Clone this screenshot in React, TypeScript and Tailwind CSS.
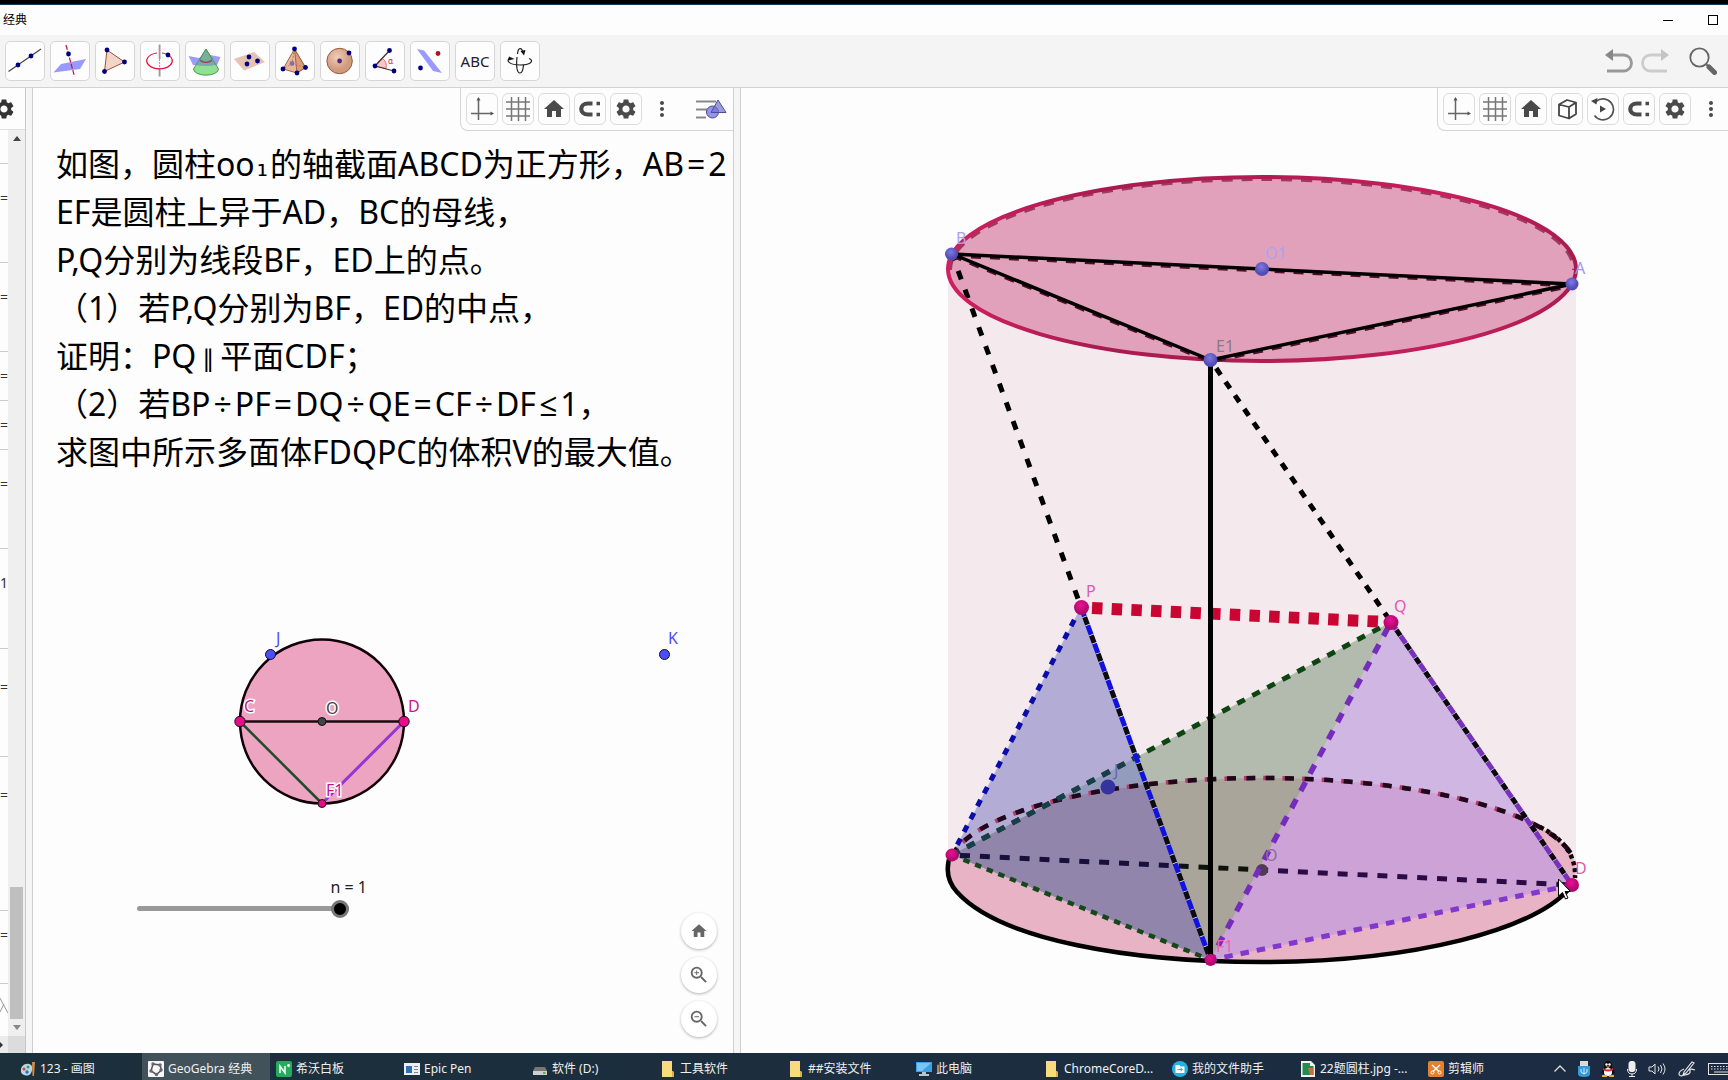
import React from 'react';
import { MdHome, MdMoreVert, MdSettings, MdZoomIn, MdZoomOut } from 'react-icons/md';

type IconProps = { className?: string };

const NAVY = '#00007f';

const Dot = ({ x, y, fill = NAVY, r = 2.4 }: { x: number; y: number; fill?: string; r?: number }) => (
    <circle cx={x} cy={y} r={r} fill={fill} />
);

/* ---------- tool icons ---------- */

const LineIcon = () => (
    <>
        <path d="M3.5 30.5L36 8" stroke="#444" strokeWidth="1.2" />
        <Dot x={13} y={24} />
        <Dot x={26} y={15} />
    </>
);

const PerpendicularIcon = () => (
    <>
        <path d="M3.500 31.500L11 23L36 18L30 28Z" fill="#9999ff" />
        <path d="M16 4L24.5 35.5" stroke="#c8102e" strokeWidth="1.2" strokeDasharray="5 1.5" />
        <Dot x={18.5} y={13} />
    </>
);

const PolygonIcon = () => (
    <>
        <path d="M12 9L29.5 21L9.5 30.5Z" fill="#f3d5c8" stroke="#a0522d" />
        <Dot x={12} y={9} />
        <Dot x={29.5} y={21} />
        <Dot x={9.5} y={30.5} />
    </>
);

const AxisCircleIcon = () => (
    <>
        <path d="M19.6 3.5V18M19.6 28V35.5" stroke="#999" strokeWidth="1.8" />
        <path d="M19.6 18V28" stroke="#999" strokeWidth="1" strokeDasharray="2 1" />
        <path d="M17 12A12.7 8 0 1 0 22 12" fill="none" stroke="#dc143c" strokeWidth="1.2" />
        <Dot x={28} y={14} />
    </>
);

const IntersectIcon = () => (
    <>
        <path d="M3.500 15L14 17L20 13L35.500 16L32 24H8Z" fill="#9c9cf5" />
        <path d="M21 8L8.500 28A12.5 6.200 0 0 0 33.500 28Z" fill="#8fe08f" stroke="#2a8a3a" strokeWidth="0.8" />
        <path d="M21 8L15 18Q21 24 27 18Z" fill="#7cae9c" stroke="#2a8a3a" strokeWidth="0.6" />
        <path d="M15 18Q21 24 27 18L31 24Q21 26 11 24Z" fill="#6f8fc0" opacity="0.7" />
        <path d="M15 19.500Q21 23.500 27 19.500" fill="none" stroke="#a03050" strokeWidth="1.2" />
    </>
);

const PlaneIcon = () => (
    <>
        <path d="M4 18L24 11L35 21L14 29.500Z" fill="#e6c3b1" />
        <Dot x={19} y={16} />
        <Dot x={27.5} y={20} />
        <Dot x={17} y={23} />
    </>
);

const PyramidIcon = () => (
    <>
        <path d="M19.500 8L8 28L22 32L30.500 26.500Z" fill="#e8b89b" stroke="#a0522d" strokeWidth="0.9" />
        <path d="M19.500 8L22 32L30.500 26.500Z" fill="#d99c7a" stroke="#a0522d" strokeWidth="0.8" />
        <path d="M19.500 8L17 22.500L8 28M17 22.500L30.500 26.500" fill="none" stroke="#b36b50" strokeWidth="0.8" strokeDasharray="2 1.500" />
        <Dot x={17} y={22.5} fill="#8d6bb0" />
        <Dot x={19.5} y={8} />
        <Dot x={8} y={28} />
        <Dot x={22} y={32} />
        <Dot x={30.5} y={26.5} />
    </>
);

const SphereIcon = () => (
    <>
        <defs>
            <radialGradient id="ball" cx="40%" cy="35%">
                <stop offset="0" stopColor="#f2cdb9" />
                <stop offset="1" stopColor="#cf9a7e" />
            </radialGradient>
        </defs>
        <circle cx="19.6" cy="20" r="12.7" fill="url(#ball)" stroke="#9a5a3a" />
        <Dot x={19.6} y={20} fill="#4b2a78" />
        <Dot x={29} y={12} />
    </>
);

const AngleIcon = () => (
    <>
        <path d="M10 25L17 17A10 10 0 0 1 21 27.500Z" fill="#ffc4c4" stroke="#e05560" strokeWidth="0.8" />
        <path d="M24.500 9.500L10 25L29 30" fill="none" stroke="#333" strokeWidth="1.2" />
        <Dot x={10} y={25} />
        <Dot x={24.5} y={9.5} />
        <Dot x={29} y={30} />
        <text x="23" y="23" className="text-[8px]" fill="#dc2040" fontFamily="Noto Sans">α</text>
    </>
);

const ReflectIcon = () => (
    <>
        <path d="M7 8L14 9.500L32 32L23 30Z" fill="#9999ff" />
        <Dot x={28} y={12.5} fill="#b01028" />
        <Dot x={10.5} y={27} />
    </>
);

const RotateViewIcon = () => (
    <>
        <path d="M10 17C5 20 10 24 20 24S35 20 29 17.500" fill="none" stroke="#222" strokeWidth="1.200" />
        <path d="M17 16C16 26 17 32 20 32S23 28 23.500 24M23 12C22 6 18 6 17.500 13" fill="none" stroke="#222" strokeWidth="1.200" />
        <path d="M20.500 10L25.500 9L24 14.500ZM8 19.500L9 15.500L14.500 18Z" fill="#111" />
    </>
);

const tools = [
    { name: 'Line', icon: <LineIcon /> },
    { name: 'Perpendicular line', icon: <PerpendicularIcon /> },
    { name: 'Polygon', icon: <PolygonIcon /> },
    { name: 'Circle with axis', icon: <AxisCircleIcon /> },
    { name: 'Intersect two surfaces', icon: <IntersectIcon /> },
    { name: 'Plane through three points', icon: <PlaneIcon /> },
    { name: 'Pyramid', icon: <PyramidIcon /> },
    { name: 'Sphere', icon: <SphereIcon /> },
    { name: 'Angle', icon: <AngleIcon /> },
    { name: 'Reflect about plane', icon: <ReflectIcon /> },
    { name: 'Text', icon: null },
    { name: 'Rotate 3D view', icon: <RotateViewIcon /> },
];

/* ---------- view bar icons ---------- */

const AxesIcon = ({ className }: IconProps) => (
    <svg viewBox="0 0 24 24" className={className} fill="none" stroke="#666" strokeWidth="1.5">
        <path d="M8.500 1.500V23M1 16.500H22" />
        <path d="M8.500 0L6.500 3.500H10.500ZM24 16.500L20.500 14.500V18.500Z" fill="#555" stroke="none" />
    </svg>
);

const GridIcon = ({ className }: IconProps) => (
    <svg viewBox="0 0 24 24" className={className} fill="none" stroke="#777" strokeWidth="1.500">
        <path d="M5.500 0V24M12.500 0V24M19.500 0V24M0 5H24M0 12H24M0 19H24" />
    </svg>
);

const MagnetIcon = ({ className }: IconProps) => (
    <svg viewBox="0 0 24 24" className={className} fill="none" stroke="#4a4a4a" strokeWidth="4.200">
        <path d="M14.500 6.500H10C1 6.500 1 17.500 10 17.500H14.500" />
        <path d="M18.500 6.500H22M18.500 17.500H22" strokeWidth="3.500" />
    </svg>
);

const CubeIcon = ({ className }: IconProps) => (
    <svg viewBox="0 0 24 24" className={className} fill="none" stroke="#444" strokeWidth="1.8" strokeLinejoin="round">
        <path d="M4 7.500L12 3L21 5.500V17L14 21.500L4 18.500ZM4 7.500L14 10L21 5.500M14 10V21.500" />
    </svg>
);

const SpinIcon = ({ className }: IconProps) => (
    <svg viewBox="0 0 24 24" className={className} fill="none" stroke="#555" strokeWidth="1.700">
        <path d="M5 4.500A10.500 10.500 0 1 1 3.500 18.500" />
        <path d="M0 4L6.500 1L5.500 7.500Z" fill="#444" stroke="none" />
        <path d="M9 8.500L15 12L9 15.500Z" fill="#444" stroke="none" />
    </svg>
);

const StyleIcon = () => (
    <svg viewBox="0 0 32 24" className="h-6 w-8">
        <path d="M1 4.500H21M1 12.500H12M1 20.500H11" stroke="#888" strokeWidth="2" />
        <circle cx="17.500" cy="15" r="6" fill="#9494ea" stroke="#4c4c8c" />
        <path d="M23 3L31 15.500H16Z" fill="#7474d0" fillOpacity="0.7" stroke="#4c4c9c" />
    </svg>
);

const BarButton = ({ label, children }: { label: string; children: React.ReactNode }) => (
    <button aria-label={label} className="flex size-8 items-center justify-center rounded-md border border-[#dcdcdc] bg-[#fdfdfd]">
        {children}
    </button>
);

const ViewBar = ({ is3D = false }: { is3D?: boolean }) => (
    <div className={`flex h-[43px] shrink-0 items-center gap-1 self-end rounded-bl-lg border-b border-l border-[#d4d4d4] pl-[5px] ${is3D ? 'pr-px' : ''}`}>
        <BarButton label="Axes"><AxesIcon className="size-6" /></BarButton>
        <BarButton label="Grid"><GridIcon className="size-6" /></BarButton>
        <BarButton label="Default view"><MdHome className="size-6 text-[#4a4a4a]" /></BarButton>
        {is3D && (
            <>
                <BarButton label="Projection"><CubeIcon className="size-6" /></BarButton>
                <BarButton label="Spin"><SpinIcon className="size-6" /></BarButton>
            </>
        )}
        <BarButton label="Snap"><MagnetIcon className="size-6" /></BarButton>
        <BarButton label="Settings"><MdSettings className="size-6 text-[#4a4a4a]" /></BarButton>
        <button aria-label="More" className="flex size-8 items-center justify-center">
            <MdMoreVert className="size-6 text-[#4a4a4a]" />
        </button>
        {!is3D && (
            <button aria-label="Style bar" className="ml-[11px] mr-1 flex h-8 w-9 items-center justify-center">
                <StyleIcon />
            </button>
        )}
    </div>
);

/* ---------- algebra strip ---------- */

const algebraRows = [
    { h: 'h-[34px]', mark: '' },
    { h: 'h-[99px] pt-6', mark: '=' },
    { h: 'h-[89px] pt-6', mark: '=' },
    { h: 'h-[49px] pt-3.5', mark: '=' },
    { h: 'h-[49px] pt-3.5', mark: '=' },
    { h: 'h-[99px] pt-6', mark: '=' },
    { h: 'h-[100px] pt-6', mark: '1' },
    { h: 'h-[108px] pt-7', mark: '=' },
    { h: 'h-[154px] pt-7', mark: '=' },
    { h: 'h-[73px] pt-3.5', mark: '=' },
];

const AlgebraStrip = () => (
    <aside className="flex w-[26px] shrink-0 flex-col overflow-hidden border-r border-[#c8c8c8]">
        <div className="flex h-[42px] shrink-0 items-center overflow-hidden border-b border-[#ddd]">
            <button aria-label="Algebra settings" className="-ml-2 flex items-center">
                <MdSettings className="size-6 shrink-0 text-[#333]" />
            </button>
        </div>
        <div className="flex min-h-0 flex-1">
            <div className="w-2 overflow-hidden">
                {algebraRows.map((row, i) => (
                    <div key={i} className={`${row.h} flex items-start justify-end overflow-hidden border-b border-[#ccc] text-sm leading-5 text-[#333]`}>
                        {row.mark}
                    </div>
                ))}
                <svg viewBox="0 0 8 50" className="h-[50px] w-2" fill="none" stroke="#999">
                    <path d="M0 14L3 20L8 29M0 28L4 20" />
                </svg>
            </div>
            <div className="flex flex-1 flex-col items-center bg-[#efefef] pt-1.5">
                <svg viewBox="0 0 8 5" className="h-[5px] w-2"><path d="M0 5L4 0L8 5Z" fill="#444" /></svg>
                <div className="grow-[746]" />
                <div className="w-[13px] grow-[132] bg-[#bfbfbf]" />
                <svg viewBox="0 0 8 5" className="my-1.5 h-[5px] w-2 shrink-0"><path d="M0 0L4 5L8 0Z" fill="#888" /></svg>
            </div>
        </div>
        <div className="flex h-[17px] shrink-0 items-center bg-[#ececec]">
            <div className="h-full w-2 pt-1.5"><svg viewBox="0 0 4 6" className="h-1.5 w-1"><path d="M0 0L3 3L0 6Z" fill="#333" /></svg></div>
            <div className="h-full flex-1 bg-[#dcdcdc]" />
        </div>
    </aside>
);

/* ---------- 2D view ---------- */

const Op = ({ children }: { children: React.ReactNode }) => (
    <span className="px-[3px] font-['Open_Sans',sans-serif]">{children}</span>
);

const Statement = () => (
    <div className="shrink-0 whitespace-nowrap pl-[23px] pt-[9px] text-[32px] leading-[48px] text-black">
        <p>如图，圆柱oo<span className="px-0.5 font-['DejaVu_Sans',sans-serif] text-[28px] leading-none">₁</span>的轴截面ABCD为正方形，AB<Op>=</Op>2</p>
        <p>EF是圆柱上异于AD，BC的母线，</p>
        <p>P,Q分别为线段BF，ED上的点。</p>
        <p>（1）若P,Q分别为BF，ED的中点，</p>
        <p>证明：PQ<span className="px-1.5 align-middle font-['DejaVu_Sans',sans-serif] text-2xl leading-none">∥</span>平面CDF；</p>
        <p>（2）若BP<Op>÷</Op>PF<Op>=</Op>DQ<Op>÷</Op>QE<Op>=</Op>CF<Op>÷</Op>DF<Op>≤</Op>1，</p>
        <p>求图中所示多面体FDQPC的体积V的最大值。</p>
    </div>
);

const halo = 'stroke-white [paint-order:stroke] [stroke-width:3px]';

const PlanePlot = () => (
    <svg viewBox="33 476 700 390" className="w-full text-base" preserveAspectRatio="xMinYMin meet">
        <circle cx="322" cy="721.500" r="82" fill="#eda4c0" stroke="#120008" strokeWidth="2.500" />
        <path d="M240 721.500H404" stroke="#1a0a12" strokeWidth="2.500" />
        <path d="M240 721.500L322 803.500" stroke="#1f4a2c" strokeWidth="2.500" />
        <path d="M404 721.500L322 803.500" stroke="#9436d6" strokeWidth="3" />
        <g stroke="#111">
            <circle cx="270.500" cy="654.500" r="5" fill="#4d4dff" />
            <circle cx="664.500" cy="654.500" r="5" fill="#4d4dff" />
            <circle cx="240" cy="721.500" r="5.200" fill="#ea0a8c" />
            <circle cx="404" cy="721.500" r="5.200" fill="#ea0a8c" />
            <circle cx="322" cy="721.500" r="4" fill="#444" />
            <circle cx="322" cy="803.500" r="4" fill="#ea0a8c" />
        </g>
        <text x="276" y="644" fill="#4d4dee">J</text>
        <text x="668" y="644" fill="#4d4dee">K</text>
        <text x="244" y="712" fill="#c7158c" className={halo}>C</text>
        <text x="326" y="714" fill="#444" className={halo}>O</text>
        <text x="408" y="712" fill="#c7158c">D</text>
        <text x="326" y="796" fill="#c7158c" className={halo}>F1</text>
    </svg>
);

const RoundButton = ({ label, children }: { label: string; children: React.ReactNode }) => (
    <button aria-label={label} className="flex size-9 items-center justify-center rounded-full bg-white text-[#666] shadow-[0_1px_3px_rgba(0,0,0,0.3)]">
        {children}
    </button>
);

const Graphics2D = () => (
    <section className="relative flex min-w-0 flex-[700] flex-col overflow-hidden">
        <ViewBar />
        <Statement />
        <PlanePlot />
        <div className="ml-[104px] flex w-[212px] shrink-0 flex-col pt-[9px]">
            <label htmlFor="n" className="mr-[-18px] self-end text-base leading-6 text-[#222]">n = 1</label>
            <input
                id="n"
                type="range"
                min="0"
                max="1"
                step="0.01"
                defaultValue="1"
                className="mt-[7px] h-[5px] w-full appearance-none rounded-full bg-[#999] [&::-webkit-slider-thumb]:size-[18px] [&::-webkit-slider-thumb]:appearance-none [&::-webkit-slider-thumb]:rounded-full [&::-webkit-slider-thumb]:border-[3px] [&::-webkit-slider-thumb]:border-[#777] [&::-webkit-slider-thumb]:bg-black"
            />
        </div>
        <div className="absolute bottom-4 right-4 flex flex-col gap-2">
            <RoundButton label="Standard view"><MdHome className="size-[18px]" /></RoundButton>
            <RoundButton label="Zoom in"><MdZoomIn className="size-[22px]" /></RoundButton>
            <RoundButton label="Zoom out"><MdZoomOut className="size-[22px]" /></RoundButton>
        </div>
    </section>
);

/* ---------- 3D view ---------- */

const Ball = ({ x, y, fill, r = 6.5 }: { x: number; y: number; fill: string; r?: number }) => (
    <circle cx={x} cy={y} r={r} fill={`url(#${fill})`} />
);

const Cylinder = () => (
    <svg viewBox="741 131 987 922" className="min-h-0 w-full flex-1 text-base" fill="none">
        <defs>
            <radialGradient id="violet" cx="45%" cy="35%">
                <stop offset="0" stopColor="#8078e4" />
                <stop offset="1" stopColor="#514db4" />
            </radialGradient>
            <radialGradient id="magenta" cx="45%" cy="35%">
                <stop offset="0" stopColor="#ea1297" />
                <stop offset="1" stopColor="#b00a6c" />
            </radialGradient>
            <linearGradient id="rim" x1="0" x2="1">
                <stop offset="0" stopColor="#d0205f" />
                <stop offset="0.25" stopColor="#a81b4e" />
                <stop offset="0.5" stopColor="#b21c53" />
                <stop offset="0.8" stopColor="#c71f5c" />
                <stop offset="1" stopColor="#a81b4e" />
            </linearGradient>
            <linearGradient id="diameter" gradientUnits="userSpaceOnUse" x1="952" y1="0" x2="1572" y2="0">
                <stop offset="0.370" stopColor="#190f3d" />
                <stop offset="0.370" stopColor="#0c120c" />
                <stop offset="0.500" stopColor="#0c120c" />
                <stop offset="0.500" stopColor="#2c0a45" />
            </linearGradient>
            <clipPath id="base"><ellipse cx="1262" cy="870" rx="314" ry="92" /></clipPath>
        </defs>

        {/* side surface and the two discs */}
        <path d="M948 269H1576V870H948Z" fill="#f4eaee" />
        <ellipse cx="1262" cy="870" rx="314" ry="92" fill="#e7b3c5" />
        <ellipse cx="1262" cy="269" rx="314" ry="92" fill="#e2a1ba" />

        {/* faces of the solid */}
        <path d="M952 855L1391 622L1210.500 960Z" fill="#b2bbad" />
        <path d="M1081 607L952 855L1210.500 960Z" fill="#b3add6" />
        <path d="M952 855L1137 757L1210.500 960Z" fill="#939cbc" />
        <path d="M1391 622L1210.500 960L1572 885Z" fill="#d0b7e3" />
        <g clipPath="url(#base)">
            <path d="M952 855L1391 622L1210.500 960Z" fill="#aaa59b" />
            <path d="M952 855L1137 757L1210.500 960Z" fill="#9185ab" />
            <path d="M1391 622L1210.500 960L1572 885Z" fill="#cda2d6" />
        </g>

        {/* bottom rim */}
        <path d="M952 855.400A314 92 0 0 1 1572 855.400" stroke="#b83a6c" strokeWidth="4.500" strokeDasharray="11 8.500" strokeDashoffset="2.500" />
        <path d="M952 855.400A314 92 0 0 1 1572 855.400" stroke="#1c0a1c" strokeWidth="4.500" strokeDasharray="9 10.500" />
        <path d="M1540 827Q1577 846 1575 878" stroke="#100408" strokeWidth="4.500" strokeDasharray="4 3" />
        <path d="M951 853C946 866 946 880 957 892C1000 940 1130 962 1262 962C1410 962 1540 930 1572 885" stroke="#000" strokeWidth="4.500" />
        <circle cx="1108" cy="787" r="7.500" fill="#35339f" />

        {/* base segments */}
        <path d="M952 855L1572 885" stroke="url(#diameter)" strokeWidth="5" strokeDasharray="10 9.900" strokeDashoffset="-8" />
        <circle cx="1262" cy="870" r="6" fill="#4d3c53" />
        <path d="M952 855L1210.500 960" stroke="#14481b" strokeWidth="4.500" strokeDasharray="6.500 6" />
        <path d="M1572 885L1210.500 960" stroke="#8238cc" strokeWidth="5" strokeDasharray="8.500 8" />

        {/* lateral segments */}
        <path d="M952 855L1391 622" stroke="#0d4511" strokeWidth="5" strokeDasharray="8.500 8.500" />
        <path d="M952 855L1137 757" stroke="#183e48" strokeWidth="5" strokeDasharray="8.500 8.500" />
        <path d="M1081 607L952 855" stroke="#0a0da8" strokeWidth="5" strokeDasharray="7 7.500" />
        <path d="M1391 622L1210.500 960" stroke="#752bbb" strokeWidth="5.500" strokeDasharray="10 9.500" strokeDashoffset="-6" />
        <path d="M1081 607L1210.500 960" stroke="#e6e2f4" strokeWidth="4" />
        <path d="M1081 607L1210.500 960" stroke="#1212df" strokeWidth="5" strokeDasharray="10 9.500" />
        <path d="M1081 607L1210.500 960" stroke="#0b0b12" strokeWidth="5" strokeDasharray="8 11.500" strokeDashoffset="-10.700" />
        <path d="M1391 622L1572 885" stroke="#efe4f6" strokeWidth="4" />
        <path d="M1391 622L1572 885" stroke="#7632bb" strokeWidth="5" strokeDasharray="9 8" />
        <path d="M1391 622L1572 885" stroke="#0c0810" strokeWidth="5" strokeDasharray="7 10" strokeDashoffset="-9.500" />
        <path d="M952 254L1081 607" stroke="#000" strokeWidth="5" strokeDasharray="9 11" strokeDashoffset="-18" />
        <path d="M1210.500 360L1391 622" stroke="#000" strokeWidth="5" strokeDasharray="8 8.500" strokeDashoffset="-10" />
        <path d="M1092 608L1386 622" stroke="#c90531" strokeWidth="12" strokeDasharray="10.500 9.200" />
        <path d="M1210.500 360V960" stroke="#000" strokeWidth="5" />

        {/* top disc */}
        <path d="M950 270A312 91 0 0 1 1574 270" stroke="#8d1f4a" strokeWidth="4" strokeDasharray="11 9" strokeOpacity="0.8" />
        <ellipse cx="1262" cy="269" rx="314" ry="92" stroke="url(#rim)" strokeWidth="4" />
        <path d="M952 256L1572 286M952 256L1210.500 362L1572 286" stroke="#4d1026" strokeWidth="3" strokeDasharray="10 9" />
        <path d="M952 254L1572 284M952 254L1210.500 360L1572 284" stroke="#000" strokeWidth="3.500" />

        <Ball x={951.5} y={254} fill="violet" />
        <Ball x={1572} y={284} fill="violet" />
        <Ball x={1262} y={269} fill="violet" r={7} />
        <Ball x={1210.5} y={360} fill="violet" r={7} />
        <Ball x={1081.5} y={607.5} fill="magenta" r={7.5} />
        <Ball x={1391} y={622.5} fill="magenta" r={7.5} />
        <Ball x={952} y={855} fill="magenta" r={6.5} />
        <Ball x={1572} y={885} fill="magenta" r={7} />
        <Ball x={1210.5} y={960} fill="magenta" r={6} />

        <text x="956" y="244" fill="#aaa4f0">B</text>
        <text x="1265" y="259" fill="#aaa4f0">O1</text>
        <text x="1575" y="274" fill="#9c98ec">A</text>
        <text x="1216" y="352" fill="#8a7a84">E1</text>
        <text x="1086" y="597" fill="#df59b0">P</text>
        <text x="1394" y="612" fill="#df59b0">Q</text>
        <text x="1114" y="776" fill="#6664b4">J</text>
        <text x="1265" y="861" fill="#8c6c96">O</text>
        <text x="1575" y="874" fill="#df59b0">D</text>
        <text x="1216" y="952" fill="#f062ae">F1</text>

        <path d="M1558.500 879V896L1562.500 892.500L1565.500 899L1568 898L1565 891.500H1570.500Z" fill="#fff" stroke="#000" />
    </svg>
);

/* ---------- taskbar ---------- */

const Folder = () => (
    <svg viewBox="0 0 16 16" className="size-4"><path d="M2 0H12V10L14 11V16H2Z" fill="#f6dc7e" /><path d="M12 10L14 11V16H12Z" fill="#d9b24c" /></svg>
);

const tasks = [
    {
        name: '123 - 画图',
        icon: (
            <svg viewBox="0 0 16 16" className="size-4">
                <path d="M1 11C0 5 5 2 9 3S13 8 11 12S2 15 1 11Z" fill="#b9d7ea" />
                <circle cx="4" cy="8" r="1.500" fill="#d5442f" /><circle cx="8" cy="6" r="1.500" fill="#3aa14c" /><circle cx="7" cy="11" r="1.700" fill="#2d6fc4" />
                <path d="M12 1L15 1L14 15H12.500Z" fill="#d68c3c" />
            </svg>
        ),
    },
    {
        name: 'GeoGebra 经典',
        active: true,
        icon: (
            <svg viewBox="0 0 16 16" className="size-4">
                <rect width="16" height="16" rx="1" fill="#f7f7f7" />
                <path d="M5 3L12 4L13.500 9L8.500 13.500L3 10Z" fill="none" stroke="#555" strokeWidth="1.500" />
                <g fill="#667"><circle cx="5" cy="3" r="1.700" /><circle cx="12" cy="4" r="1.700" /><circle cx="13" cy="9" r="1.700" /><circle cx="8.500" cy="13.500" r="1.700" /><circle cx="3" cy="10" r="1.700" /></g>
            </svg>
        ),
    },
    {
        name: '希沃白板',
        icon: (
            <svg viewBox="0 0 16 16" className="size-4">
                <rect width="16" height="16" rx="2" fill="#25ab5b" />
                <path d="M4 12V5L9 12V5M11 4.500H14M12.500 3V6" fill="none" stroke="#fff" strokeWidth="1.500" />
            </svg>
        ),
    },
    {
        name: 'Epic Pen',
        icon: (
            <svg viewBox="0 0 16 16" className="size-4">
                <path d="M0 2H16V14H0Z" fill="#eee" /><path d="M2 5H8V12H2Z" fill="#2b70b8" /><path d="M10 5.500H14M10 8.500H14M10 11.500H14" stroke="#789" />
            </svg>
        ),
    },
    {
        name: '软件 (D:)',
        icon: (
            <svg viewBox="0 0 16 16" className="size-4"><path d="M3 6H13L15 10H1Z" fill="#777" /><path d="M1 10H15V14H1Z" fill="#d0d0d0" /><path d="M11 12H13.500" stroke="#3a3" strokeWidth="1.500" /></svg>
        ),
    },
    { name: '工具软件', icon: <Folder /> },
    { name: '##安装文件', icon: <Folder /> },
    {
        name: '此电脑',
        icon: (
            <svg viewBox="0 0 16 16" className="size-4"><path d="M0 1H16V11H0Z" fill="#3f9fe6" /><path d="M1 2H15L6 10H1Z" fill="#79c3f5" /><path d="M6 11H10V13H13V15H3V13H6Z" fill="#b7c6cf" /></svg>
        ),
    },
    { name: 'ChromeCoreD...', icon: <Folder /> },
    {
        name: '我的文件助手',
        icon: (
            <svg viewBox="0 0 16 16" className="size-4"><circle cx="8" cy="8" r="8" fill="#22b5dc" /><path d="M3.500 4H7.500L8.500 5.500H12.500V12H3.500Z" fill="#fff" /><path d="M5.500 8.500H10M8.500 7L10.500 8.500L8.500 10" fill="none" stroke="#22b5dc" /></svg>
        ),
    },
    {
        name: '22题圆柱.jpg -...',
        icon: (
            <svg viewBox="0 0 16 16" className="size-4"><path d="M1 0H11L15 4V16H1Z" fill="#f3f3f3" /><path d="M2.500 2H10V5H13.500V14H2.500Z" fill="#238c50" /><path d="M8 7H13.500V14H10Z" fill="#d06f39" /></svg>
        ),
    },
    {
        name: '剪辑师',
        icon: (
            <svg viewBox="0 0 16 16" className="size-4" fill="none" stroke="#fff"><rect width="16" height="16" rx="2" fill="#e3822d" stroke="none" /><path d="M4 4L11 10.500M12 4L5 10.500" strokeWidth="1.400" /><circle cx="4.500" cy="11.500" r="1.500" /><circle cx="11.500" cy="11.500" r="1.500" /></svg>
        ),
    },
];

const Tray = () => (
    <div className="-mr-2 ml-auto flex shrink-0 items-center gap-2 pt-1">
        <svg viewBox="0 0 16 16" className="size-4" fill="none" stroke="#ddd" strokeWidth="1.300"><path d="M2.500 10.500L8 5L13.500 10.500" /></svg>
        <svg viewBox="0 0 16 16" className="size-4"><path d="M4 0H12V5H4Z" fill="#d4dce2" /><path d="M2 5H14V13Q14 16 8 16T2 13Z" fill="#359bd8" /><path d="M5 8V11L8 13L11 11V8M8 7V13" fill="none" stroke="#d5efff" /></svg>
        <svg viewBox="0 0 16 16" className="size-4"><path d="M1 12L4 6Q4 0 8 0T12 6L15 12L12 13H4Z" fill="#0d0d0d" /><ellipse cx="8" cy="11" rx="4" ry="4" fill="#fff" /><path d="M3 7Q8 10 13 7V9Q8 12 3 9Z" fill="#d7263d" /><circle cx="6.500" cy="3.500" r="1.200" fill="#fff" /><circle cx="9.500" cy="3.500" r="1.200" fill="#fff" /><path d="M5.500 5.500H10.500L8 7ZM2 14H7V16H2ZM9 14H14V16H9Z" fill="#f2a63a" /></svg>
        <svg viewBox="0 0 16 16" className="size-4" fill="none" stroke="#eee"><rect x="5" y="0.500" width="6" height="10" rx="2" fill="#eee" /><path d="M3.500 8Q3.500 13 8 13T12.500 8M8 13V16M5 15.500H11" /></svg>
        <svg viewBox="0 0 18 16" className="h-4 w-[18px]" fill="none" stroke="#e4e4e4"><path d="M1 6H4L7 3V13L4 10H1ZM10 5.500Q12 8 10 10.500M12.500 4Q15.500 8 12.500 12M15 2.500Q19 8 15 13.500" /></svg>
        <svg viewBox="0 0 18 16" className="ml-1 h-4 w-[18px]" fill="none" stroke="#e4e4e4" strokeWidth="1.200"><path d="M5 14L6 11L14 1L16 2L8 12ZM6 8Q1 10 1 13T7 14Q13 13 12 10T17 9" /></svg>
        <svg viewBox="0 0 28 16" className="ml-1 h-4 w-7" fill="none" stroke="#e4e4e4"><rect x="0.500" y="2.500" width="27" height="11" /><path d="M3 5.500H26M3 8H26" strokeDasharray="1.500 1.500" /><path d="M6 11H22" /></svg>
    </div>
);

export default function App() {
    return (
        <div className="flex h-screen flex-col overflow-hidden bg-[#fdfdfd] font-['Noto_Sans','Noto_Sans_CJK_SC',sans-serif]">
            <header className="shrink-0">
                <div className="h-[5px] border-b border-[#1c3a50] bg-black" />
                <div className="flex h-[30px] items-center pl-[3px] text-xs text-black">
                    <h1>经典</h1>
                    <div className="ml-auto mr-[7px] flex items-center gap-[29px]">
                        <button aria-label="Minimize" className="flex size-4 items-center justify-center"><span className="h-px w-2.5 bg-black" /></button>
                        <button aria-label="Maximize" className="flex size-4 items-center justify-center"><span className="size-2.5 border border-black" /></button>
                    </div>
                </div>
                <div className="flex h-[53px] items-center border-b border-[#d2d2d2] bg-[#f4f4f4] pl-[5px]">
                    <div className="flex gap-[5px]">
                        {tools.map((tool) => (
                            <button key={tool.name} aria-label={tool.name} className="flex size-10 items-center justify-center rounded-[5px] border border-[#d6d6d6] bg-[#fdfdfd] text-[15px] text-[#222]">
                                {tool.icon ? <svg viewBox="0 0 40 40" className="size-10 shrink-0">{tool.icon}</svg> : 'ABC'}
                            </button>
                        ))}
                    </div>
                    <div className="ml-auto mr-[11px] flex items-center gap-2">
                        <button aria-label="Undo">
                            <svg viewBox="0 0 28 26" className="h-[26px] w-7" fill="none" stroke="#999" strokeWidth="2.800"><path d="M6 7H18.500A8 8 0 0 1 18.500 23H2" /><path d="M0 7L8 1V13Z" fill="#888" stroke="none" /></svg>
                        </button>
                        <button aria-label="Redo">
                            <svg viewBox="0 0 28 26" className="h-[26px] w-7" fill="none" stroke="#ccc" strokeWidth="2.800"><path d="M22 7H9.500A8 8 0 0 0 9.500 23H26" /><path d="M28 7L20 1V13Z" fill="#c4c4c4" stroke="none" /></svg>
                        </button>
                        <button aria-label="Search" className="ml-3">
                            <svg viewBox="0 0 28 28" className="size-7" fill="none" stroke="#666"><circle cx="10.500" cy="10.500" r="9.200" strokeWidth="1.800" /><path d="M17 17L20 20" strokeWidth="2" /><path d="M20 20L25.500 25.500" strokeWidth="5" strokeLinecap="round" /></svg>
                        </button>
                    </div>
                </div>
            </header>

            <main className="flex min-h-0 flex-1">
                <AlgebraStrip />
                <div className="w-[7px] shrink-0 border-r border-[#d0d0d0] bg-[#f5f5f5]" />
                <Graphics2D />
                <div className="w-2 shrink-0 border-x border-[#d0d0d0] bg-[#f5f5f5]" />
                <section className="flex min-w-0 flex-[987] flex-col">
                    <ViewBar is3D />
                    <Cylinder />
                </section>
            </main>

            <footer className="flex h-[27px] shrink-0 overflow-hidden bg-gradient-to-r from-[#1b303b] to-[#1c2b42] pl-3.5 text-xs text-[#f0f0f0]">
                {tasks.map((task) => (
                    <button key={task.name} className={`flex w-32 shrink items-center gap-1 whitespace-nowrap pl-1.5 pt-1 ${task.active ? 'bg-[#42525b]' : ''}`}>
                        <span className="shrink-0">{task.icon}</span>
                        {task.name}
                    </button>
                ))}
                <Tray />
            </footer>
        </div>
    );
}
